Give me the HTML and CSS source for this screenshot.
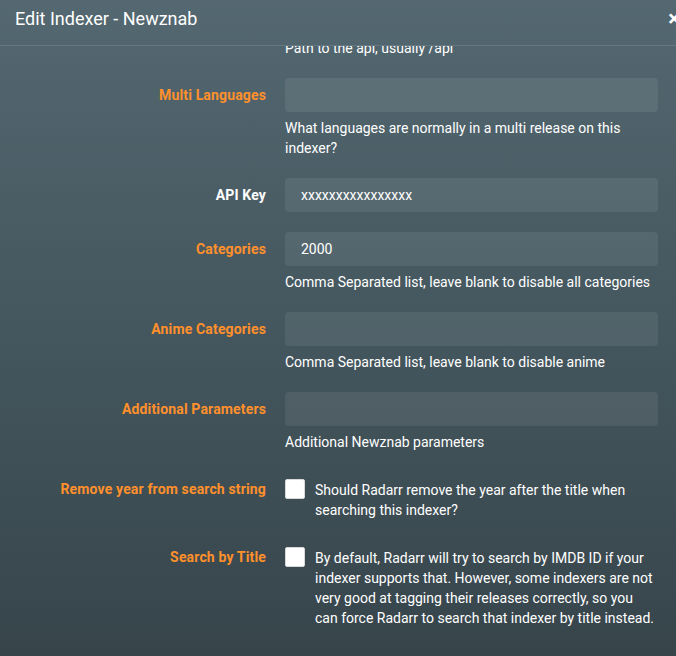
FILE: index.html
```html
<!DOCTYPE html>
<html>
<head>
<meta charset="utf-8">
<link rel="stylesheet" href="styles.css">
</head>
<body>
<div class="modal">
  <div class="modal-header">
    <h3 class="modal-title">Edit Indexer - Newznab</h3>
    <span class="close">×</span>
  </div>
  <div class="modal-body">
    <div class="scroll">
      <div class="row first">
        <div class="label"></div>
        <div class="control"><div class="help">Path to the api, usually /api</div></div>
      </div>
      <div class="row">
        <div class="label adv">Multi Languages</div>
        <div class="control">
          <div class="input"></div>
          <div class="help">What languages are normally in a multi release on this indexer?</div>
        </div>
      </div>
      <div class="row">
        <div class="label">API Key</div>
        <div class="control">
          <div class="input">xxxxxxxxxxxxxxxx</div>
        </div>
      </div>
      <div class="row">
        <div class="label adv">Categories</div>
        <div class="control">
          <div class="input">2000</div>
          <div class="help">Comma Separated list, leave blank to disable all categories</div>
        </div>
      </div>
      <div class="row">
        <div class="label adv">Anime Categories</div>
        <div class="control">
          <div class="input"></div>
          <div class="help">Comma Separated list, leave blank to disable anime</div>
        </div>
      </div>
      <div class="row">
        <div class="label adv">Additional Parameters</div>
        <div class="control">
          <div class="input"></div>
          <div class="help">Additional Newznab parameters</div>
        </div>
      </div>
      <div class="row">
        <div class="label adv">Remove year from search string</div>
        <div class="control check">
          <span class="box"></span>
          <div class="help side">Should Radarr remove the year after the title when searching this indexer?</div>
        </div>
      </div>
      <div class="row">
        <div class="label adv">Search by Title</div>
        <div class="control check">
          <span class="box"></span>
          <div class="help side">By default, Radarr will try to search by IMDB ID if your indexer supports that. However, some indexers are not very good at tagging their releases correctly, so you can force Radarr to search that indexer by title instead.</div>
        </div>
      </div>
    </div>
  </div>
</div>
</body>
</html>
```

FILE: styles.css
```css
html, body {
  margin: 0;
  padding: 0;
  width: 676px;
  height: 656px;
  overflow: hidden;
}
body {
  font-family: Roboto, "Open Sans", sans-serif;
  font-size: 14px;
  color: #fff;
  background: linear-gradient(to bottom, #546871 0%, #475a62 40%, #37454b 100%);
}
.modal {
  height: 656px;
  display: flex;
  flex-direction: column;
}
.modal-header {
  height: 45px;
  border-bottom: 1px solid #647881;
  display: flex;
  align-items: center;
  justify-content: space-between;
  padding-left: 15px;
  box-sizing: content-box;
}
.modal-title {
  margin: 0;
  font-size: 18px;
  font-weight: 400;
  line-height: 20px;
  margin-top: -8px;
}
.close {
  font-size: 22px;
  font-weight: 700;
  line-height: 20px;
  margin-top: -8px;
  margin-right: -4px;
  color: #fff;
}
.modal-body {
  flex: 1;
  overflow: hidden;
}
.scroll {
  margin-top: -8px;
  padding-right: 18px;
}
.row {
  display: grid;
  grid-template-columns: 266px 373px;
  column-gap: 19px;
  margin-bottom: 20px;
}
.label {
  text-align: right;
  font-weight: 700;
  line-height: 20px;
  padding-top: 7px;
  color: #fff;
  letter-spacing: 0.15px;
}
.label.adv {
  color: #ff902b;
}
.first .label { padding-top: 0; }
.input {
  height: 34px;
  box-sizing: border-box;
  border-radius: 4px;
  background: rgba(255, 255, 255, 0.075);
  padding: 7px 16px;
  line-height: 20px;
  color: #fff;
}
.help {
  line-height: 20px;
  margin-top: 6px;
  color: #fff;
}
.first .help { margin-top: 0; }
.check {
  display: flex;
  align-items: flex-start;
  gap: 10px;
}
.box {
  flex: none;
  width: 20px;
  height: 20px;
  box-sizing: border-box;
  margin-top: 7px;
  background: #fff;
  border: 1px solid #d8d8d8;
  border-radius: 2px;
}
.help.side {
  margin-top: 8px;
}
```
